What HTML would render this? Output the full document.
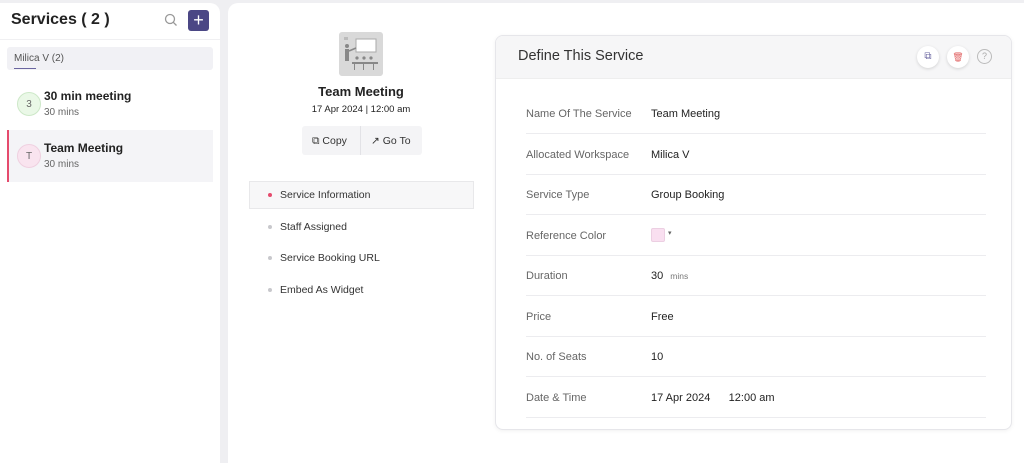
<!DOCTYPE html>
<html><head><style>
*{box-sizing:border-box;margin:0;padding:0}
body{width:1024px;height:454px;background:#efeff2;font-family:"Liberation Sans",sans-serif;position:relative;overflow:hidden;color:#222}
.abs{position:absolute}
.left{left:0;top:3px;width:220px;height:460px;background:#fff;border-radius:0 10px 0 0}
.main{left:228px;top:3px;width:800px;height:460px;background:#fff;border-radius:10px 0 0 0}
.card{left:495px;top:35px;width:517px;height:395px;background:#fff;border:1px solid #e6e6ea;border-radius:8px;box-shadow:0 1px 4px rgba(0,0,0,.06);overflow:hidden}
.ch{height:43px;background:#f6f6f7;border-bottom:1px solid #eee}
.lbl{position:absolute;left:30px;font-size:11px;color:#666}
.val{position:absolute;left:155px;font-size:11px;color:#222}
.hr{position:absolute;left:30px;width:460px;height:1px;background:#ececef}
.nav{position:absolute;left:280px;font-size:10.5px;color:#333}
.dot{position:absolute;left:268px;width:4px;height:4px;border-radius:50%;background:#c8c8cc}
.circ{position:absolute;width:24px;height:24px;border-radius:50%;font-size:10px;color:#666;text-align:center;line-height:24px}
</style></head><body>
<div class="abs left"></div>
<div class="abs main"></div>
<div class="abs" style="left:11px;top:11px;font-size:16px;font-weight:bold;color:#222">Services ( 2 )</div>
<svg class="abs" style="left:164px;top:13px" width="14" height="14" viewBox="0 0 14 14"><circle cx="6" cy="6" r="4.5" fill="none" stroke="#999" stroke-width="1.3"/><path d="M9.3 9.3L12.5 12.5" stroke="#999" stroke-width="1.3"/></svg>
<div class="abs" style="left:188px;top:10px;width:21px;height:21px;background:#4b4785;border-radius:3px;color:#fff;font-size:18px;line-height:20px;text-align:center">+</div>
<div class="abs" style="left:0;top:39px;width:220px;height:1px;background:#f0f0f2"></div>
<div class="abs" style="left:7px;top:47px;width:206px;height:23px;background:#f1f1f5;border-radius:3px"></div>
<div class="abs" style="left:14px;top:53px;font-size:10px;color:#555">Milica V (2)</div>
<div class="abs" style="left:14px;top:68px;width:22px;height:1px;background:#6a65a0"></div>
<div class="circ" style="left:17px;top:92px;background:#eaf8e7;border:1px solid #cde8c8">3</div>
<div class="abs" style="left:44px;top:89px;font-size:12px;font-weight:bold">30 min meeting</div>
<div class="abs" style="left:44px;top:107px;font-size:10px;color:#666">30 mins</div>
<div class="abs" style="left:7px;top:130px;width:206px;height:52px;background:#f4f4f7;border-left:2px solid #e54b6d"></div>
<div class="circ" style="left:17px;top:144px;background:#f9e4ef;border:1px solid #efd0e0">T</div>
<div class="abs" style="left:44px;top:141px;font-size:12px;font-weight:bold">Team Meeting</div>
<div class="abs" style="left:44px;top:159px;font-size:10px;color:#666">30 mins</div>

<svg class="abs" style="left:339px;top:32px" width="44" height="44" viewBox="0 0 44 44"><rect width="44" height="44" rx="3" fill="#d9d9d9"/><rect x="17" y="7" width="20" height="13" fill="#fff" stroke="#aaa"/><rect x="5" y="5" width="4" height="3" fill="#bbb"/><circle cx="8" cy="14" r="2" fill="#888"/><rect x="6" y="17" width="4" height="12" fill="#888"/><path d="M10 19L17 16" stroke="#888" stroke-width="1.5"/><g fill="#888"><circle cx="18" cy="26" r="1.6"/><circle cx="25" cy="26" r="1.6"/><circle cx="32" cy="26" r="1.6"/><rect x="13" y="30" width="26" height="2"/><rect x="15" y="32" width="1" height="6"/><rect x="24" y="32" width="1" height="6"/><rect x="34" y="32" width="1" height="6"/></g></svg>
<div class="abs" style="left:300px;top:84px;width:122px;text-align:center;font-size:13px;font-weight:bold">Team Meeting</div>
<div class="abs" style="left:300px;top:104px;width:122px;text-align:center;font-size:9.5px">17 Apr 2024 | 12:00 am</div>
<div class="abs" style="left:302px;top:126px;width:120px;height:29px;background:#f4f4f6;border-radius:3px"></div>
<div class="abs" style="left:360px;top:126px;width:1px;height:29px;background:#e2e2e6"></div>
<div class="abs" style="left:312px;top:135px;font-size:10.5px;color:#333">⧉ Copy</div>
<div class="abs" style="left:371px;top:135px;font-size:10.5px;color:#333">↗ Go To</div>
<div class="abs" style="left:249px;top:181px;width:225px;height:28px;background:#f7f7f8;border:1px solid #e8e8ea"></div>
<div class="dot" style="top:193px;background:#e54b6d"></div><div class="nav" style="top:189px">Service Information</div>
<div class="dot" style="top:225px"></div><div class="nav" style="top:221px">Staff Assigned</div>
<div class="dot" style="top:256px"></div><div class="nav" style="top:252px">Service Booking URL</div>
<div class="dot" style="top:288px"></div><div class="nav" style="top:284px">Embed As Widget</div>

<div class="abs card">
<div class="ch"></div>
<div class="abs" style="left:22px;top:12px;font-size:14.5px;color:#333">Define This Service</div>
<div class="abs" style="left:421px;top:10px;width:22px;height:22px;border-radius:50%;background:#fff;box-shadow:0 1px 3px rgba(0,0,0,.15);font-size:10px;text-align:center;line-height:22px;color:#6a65a0">⧉</div>
<div class="abs" style="left:451px;top:10px;width:22px;height:22px;border-radius:50%;background:#fff;box-shadow:0 1px 3px rgba(0,0,0,.15);font-size:9px;text-align:center;line-height:22px;color:#e06060">🗑</div>
<div class="abs" style="left:481px;top:13px;width:15px;height:15px;border-radius:50%;border:1px solid #bbb;font-size:9px;text-align:center;line-height:13px;color:#aaa">?</div>
<div class="lbl" style="top:72px">Name Of The Service</div><div class="val" style="top:72px">Team Meeting</div><div class="hr" style="top:97px"></div>
<div class="lbl" style="top:113px">Allocated Workspace</div><div class="val" style="top:113px">Milica V</div><div class="hr" style="top:138px"></div>
<div class="lbl" style="top:153px">Service Type</div><div class="val" style="top:153px">Group Booking</div><div class="hr" style="top:178px"></div>
<div class="lbl" style="top:194px">Reference Color</div><div class="abs" style="left:155px;top:192px;width:14px;height:14px;background:#f9dff0;border:1px solid #eccfe2;border-radius:2px"></div><div class="abs" style="left:172px;top:193px;font-size:7px;color:#666">▾</div><div class="hr" style="top:219px"></div>
<div class="lbl" style="top:234px">Duration</div><div class="val" style="top:234px">30 <span style="font-size:8.5px;color:#777;margin-left:4px">mins</span></div><div class="hr" style="top:259px"></div>
<div class="lbl" style="top:275px">Price</div><div class="val" style="top:275px">Free</div><div class="hr" style="top:300px"></div>
<div class="lbl" style="top:315px">No. of Seats</div><div class="val" style="top:315px">10</div><div class="hr" style="top:340px"></div>
<div class="lbl" style="top:356px">Date &amp; Time</div><div class="val" style="top:356px">17 Apr 2024 &nbsp;&nbsp;&nbsp;&nbsp; 12:00 am</div><div class="hr" style="top:381px"></div>
</div>
</body></html>
